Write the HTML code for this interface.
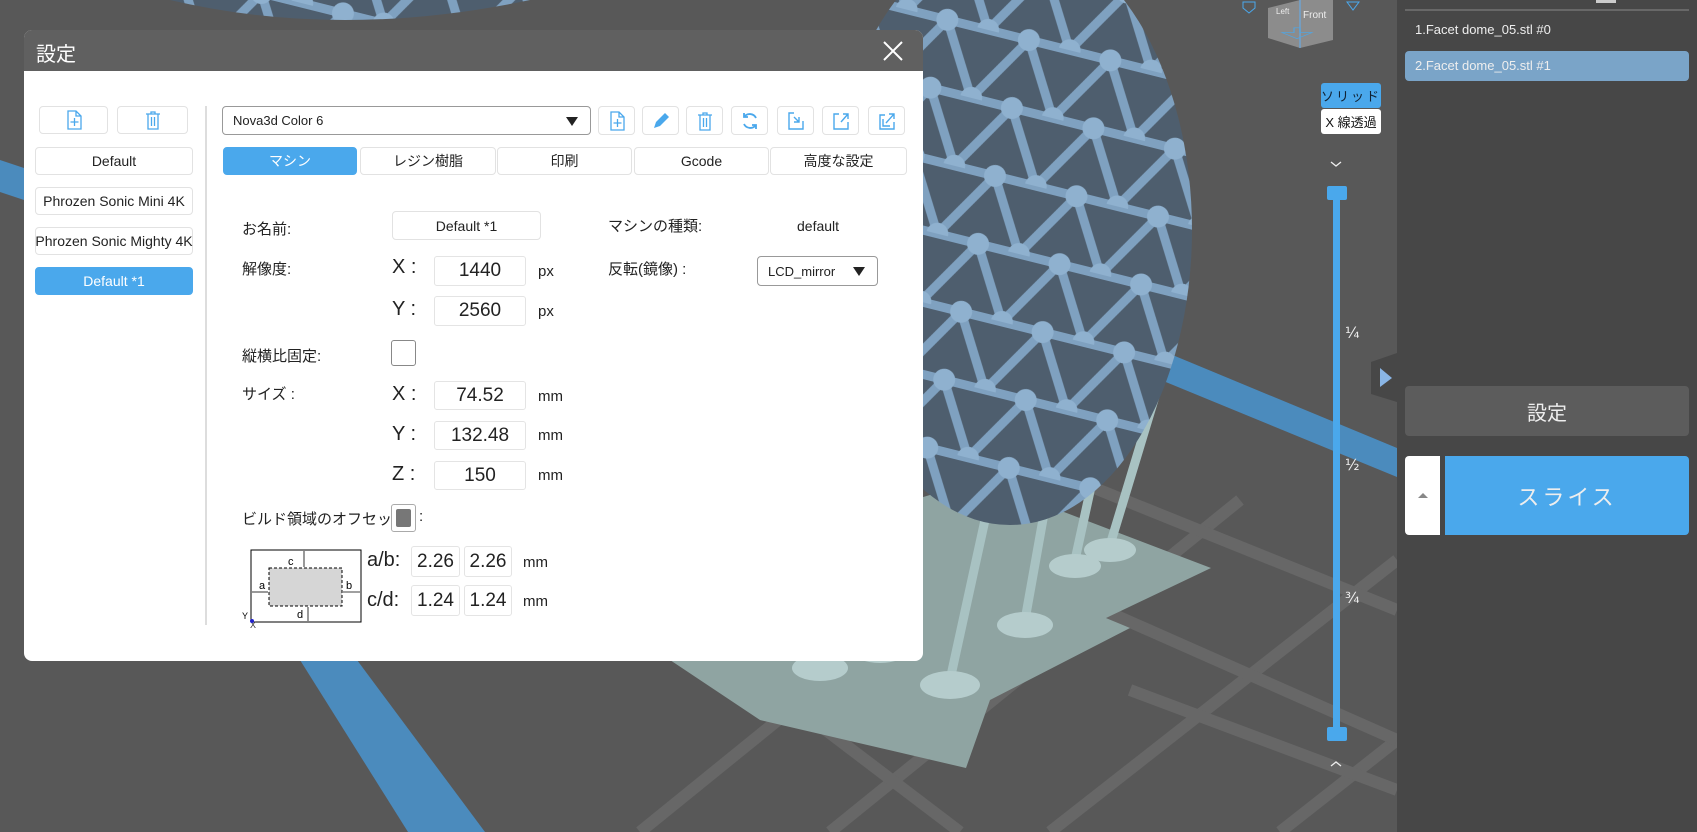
<!DOCTYPE html>
<html><head><meta charset="utf-8">
<style>
*{box-sizing:border-box;margin:0;padding:0}
body{width:1697px;height:832px;overflow:hidden;background:#585858;font-family:"Liberation Sans","Noto Sans CJK JP",sans-serif;position:relative}
.abs{position:absolute}
#dlg{left:24px;top:30px;width:899px;height:631px;background:#fff;border-radius:8px;overflow:hidden}
#tb{left:0;top:0;width:899px;height:41px;background:#606060}
.btn{position:absolute;border:1px solid #e2e2e2;border-radius:4px;background:#fff;font-size:14px;color:#222;display:flex;align-items:center;justify-content:center;white-space:nowrap}
.sel{background:#4aa8ec;color:#fff;border-color:#4aa8ec}
.lbl{position:absolute;font-size:15px;color:#222;white-space:nowrap}
.fld{position:absolute;border:1px solid #e4e4e4;border-radius:3px;font-size:19px;color:#222;display:flex;align-items:center;justify-content:center}
.big{position:absolute;font-size:20px;color:#222}
.unit{position:absolute;font-size:15px;color:#222}
.ib{position:absolute;top:76px;width:37px;height:29px;border:1px solid #e2e2e2;border-radius:4px;display:flex;align-items:center;justify-content:center}
</style></head><body>
<svg class="abs" style="left:0;top:0" width="1697" height="832">
<g stroke="#676767" stroke-width="12" fill="none">
<line x1="640" y1="832" x2="1000" y2="540"/><line x1="830" y1="832" x2="1240" y2="500"/><line x1="1050" y1="832" x2="1397" y2="560"/><line x1="1280" y1="832" x2="1397" y2="740"/>
<line x1="760" y1="680" x2="960" y2="832"/><line x1="900" y1="520" x2="1397" y2="740"/><line x1="1000" y1="450" x2="1397" y2="610"/><line x1="1130" y1="690" x2="1397" y2="790"/>
<line x1="650" y1="650" x2="820" y2="590"/>
</g>
<polygon points="300,660 357,660 485,832 408,832" fill="#4b8bbd"/>
<polygon points="1100,325 1397,448 1397,477 1100,355" fill="#4b8bbd"/>
<polygon points="0,160 24,168 24,200 0,192" fill="#4b8bbd"/>
<polygon points="780,540 980,480 1211,568 1106,618 1130,628 990,700 966,768 760,720 640,640" fill="#8fa4a2"/>
<g stroke="#a8c2c2" stroke-width="9" stroke-linecap="round">
<line x1="985" y1="520" x2="950" y2="680"/><line x1="1050" y1="480" x2="1025" y2="620"/><line x1="1110" y1="400" x2="1075" y2="560"/><line x1="1160" y1="380" x2="1110" y2="545"/>
<line x1="905" y1="510" x2="880" y2="640"/><line x1="840" y1="520" x2="820" y2="660"/>
</g>
<g fill="#b5cccc">
<ellipse cx="950" cy="685" rx="30" ry="14"/><ellipse cx="1025" cy="625" rx="28" ry="13"/><ellipse cx="1075" cy="566" rx="26" ry="12"/><ellipse cx="1110" cy="550" rx="26" ry="12"/><ellipse cx="880" cy="650" rx="28" ry="13"/><ellipse cx="820" cy="668" rx="28" ry="13"/>
</g>
<defs>
<pattern id="lat" width="84" height="70" patternUnits="userSpaceOnUse" patternTransform="rotate(14)">
<rect width="84" height="70" fill="#4e5e6e"/>
<g stroke="#7fa1c0" stroke-width="9"><line x1="0" y1="0" x2="84" y2="0"/><line x1="0" y1="70" x2="84" y2="70"/><line x1="0" y1="0" x2="42" y2="70"/><line x1="84" y1="0" x2="42" y2="70"/></g>
<g fill="#8fb1cf"><circle cx="0" cy="0" r="11"/><circle cx="84" cy="0" r="11"/><circle cx="42" cy="70" r="11"/><circle cx="0" cy="70" r="11"/><circle cx="84" cy="70" r="11"/></g>
</pattern>
</defs>
<ellipse cx="1010" cy="230" rx="182" ry="295" fill="url(#lat)"/>
<path d="M170,0 Q340,40 530,0 Z" fill="url(#lat)"/>
<polygon points="1268,8 1300,0 1333,0 1333,40 1300,48 1268,38" fill="#8c8c8c"/>
<line x1="1300" y1="0" x2="1300" y2="48" stroke="#6fa3d0" stroke-width="1.5"/>
<text x="1276" y="14" font-size="8" fill="#eee" font-family="Liberation Sans">Left</text>
<text x="1303" y="18" font-size="10" fill="#eee" font-family="Liberation Sans">Front</text>
<path d="M1290,31 h12 v-8 h6 v8 h12 l-15,10z" fill="none" stroke="#4aa8ec" transform="translate(-8,14) scale(1,.6)"/>
<path d="M1243,2 h12 v6 l-6,5 l-6,-5z" fill="none" stroke="#4aa8ec"/>
<path d="M1347,2 h12 l-6,8z" fill="none" stroke="#4aa8ec"/>
<rect x="1333" y="193" width="7" height="541" fill="#4aa8ec"/>
<rect x="1327" y="186" width="20" height="14" rx="2" fill="#4aa8ec"/>
<rect x="1327" y="727" width="20" height="14" rx="2" fill="#4aa8ec"/>
<path d="M1331,162 l5,4 l5,-4" stroke="#eee" fill="none" stroke-width="1.3"/>
<path d="M1331,766 l5,-4 l5,4" stroke="#eee" fill="none" stroke-width="1.3"/>
<text x="1345" y="338" font-size="15" fill="#eee" font-family="DejaVu Sans">¼</text>
<text x="1345" y="470" font-size="15" fill="#eee" font-family="DejaVu Sans">½</text>
<text x="1345" y="603" font-size="15" fill="#eee" font-family="DejaVu Sans">¾</text>
<rect x="1397" y="0" width="300" height="832" fill="#474747"/>
<polygon points="1371,362 1397,353 1397,402 1371,394" fill="#474747"/>
<polygon points="1380,368 1392,378 1380,387" fill="#8ab6e6"/>
<line x1="1405" y1="10" x2="1689" y2="10" stroke="#8a8a8a"/>
<rect x="1596" y="0" width="20" height="3" fill="#ccc"/>
</svg>
<div class="abs" style="left:1321px;top:83px;width:60px;height:25px;background:#4aa8ec;border-radius:3px;color:#123;font-size:13px;display:flex;align-items:center;justify-content:center;letter-spacing:2px">ソリッド</div>
<div class="abs" style="left:1321px;top:109px;width:60px;height:25px;background:#fff;border-radius:3px;color:#111;font-size:13px;display:flex;align-items:center;justify-content:center">X 線透過</div>
<div class="abs" style="left:1415px;top:22px;font-size:13px;color:#eee">1.Facet dome_05.stl #0</div>
<div class="abs" style="left:1405px;top:51px;width:284px;height:30px;background:#7aa4c8;border-radius:4px;font-size:13px;color:#eee;padding:7px 10px">2.Facet dome_05.stl #1</div>
<div class="abs" style="left:1405px;top:386px;width:284px;height:50px;background:#5c5c5c;border-radius:4px;font-size:20px;color:#eee;display:flex;align-items:center;justify-content:center">設定</div>
<div class="abs" style="left:1405px;top:456px;width:35px;height:79px;background:#fff;border-radius:4px 0 0 4px;display:flex;align-items:center;justify-content:center"><div style="width:0;height:0;border-left:5px solid transparent;border-right:5px solid transparent;border-bottom:5px solid #888"></div></div>
<div class="abs" style="left:1445px;top:456px;width:244px;height:79px;background:#4aa8ec;border-radius:0 4px 4px 0;font-size:22px;color:#eee;display:flex;align-items:center;justify-content:center;letter-spacing:3px">スライス</div>

<div id="dlg" class="abs">
<div id="tb" class="abs"></div>
<div class="abs" style="left:12px;top:8px;font-size:20px;color:#fff">設定</div>
<svg class="abs" style="left:858px;top:10px" width="22" height="22"><path d="M2,2 L20,20 M20,2 L2,20" stroke="#fff" stroke-width="2"/></svg>

<div class="btn" style="left:15px;top:76px;width:69px;height:28px"><svg width="18" height="20"><path d="M3,1 h8 l5,5 v13 h-13z M11,1 v5 h5 M9.5,8 v8 M5.5,12 h8" fill="none" stroke="#4aa8ec" stroke-width="1.3"/></svg></div>
<div class="btn" style="left:93px;top:76px;width:71px;height:28px"><svg width="18" height="20"><path d="M2,4 h14 M7,4 v-2 h4 v2 M4,4 v15 h10 v-15 M7.5,7 v9 M10.5,7 v9" fill="none" stroke="#4aa8ec" stroke-width="1.3"/></svg></div>
<div class="btn" style="left:11px;top:117px;width:158px;height:28px">Default</div>
<div class="btn" style="left:11px;top:157px;width:158px;height:28px">Phrozen Sonic Mini 4K</div>
<div class="btn" style="left:11px;top:197px;width:158px;height:28px">Phrozen Sonic Mighty 4K</div>
<div class="btn sel" style="left:11px;top:237px;width:158px;height:28px">Default *1</div>
<div class="abs" style="left:181px;top:76px;width:2px;height:519px;background:#ddd"></div>

<div class="btn" style="left:198px;top:76px;width:369px;height:29px;justify-content:flex-start;padding-left:10px;border-color:#999;font-size:13px">Nova3d Color 6<div style="position:absolute;right:12px;top:10px;border-left:6px solid transparent;border-right:6px solid transparent;border-top:9px solid #222"></div></div>
<div class="ib" style="left:574px"><svg width="18" height="20"><path d="M3,1 h8 l5,5 v13 h-13z M11,1 v5 h5 M9.5,8 v8 M5.5,12 h8" fill="none" stroke="#4aa8ec" stroke-width="1.3"/></svg></div>
<div class="ib" style="left:618px"><svg width="20" height="20"><path d="M3,17 l2,-6 l9,-9 l4,4 l-9,9z" fill="#4aa8ec"/></svg></div>
<div class="ib" style="left:662px"><svg width="18" height="20"><path d="M2,4 h14 M7,4 v-2 h4 v2 M4,4 v15 h10 v-15 M7.5,7 v9 M10.5,7 v9" fill="none" stroke="#4aa8ec" stroke-width="1.3"/></svg></div>
<div class="ib" style="left:707px"><svg width="20" height="20"><path d="M16,7 A7,7 0 0 0 4,6 M4,13 A7,7 0 0 0 16,14 M4,2 v4 h4 M16,18 v-4 h-4" fill="none" stroke="#4aa8ec" stroke-width="1.8"/></svg></div>
<div class="ib" style="left:753px"><svg width="20" height="20"><path d="M8,2 h-5 v16 h14 v-8 M8,6 l5,5 M13,6 v5 h-5" fill="none" stroke="#4aa8ec" stroke-width="1.4"/></svg></div>
<div class="ib" style="left:798px"><svg width="20" height="20"><path d="M8,3 h-5 v15 h14 v-7 M10,11 l7,-8 M12,3 h5 v5" fill="none" stroke="#4aa8ec" stroke-width="1.4"/></svg></div>
<div class="ib" style="left:844px"><svg width="20" height="20"><path d="M8,4 h-5 v14 h14 v-7 M6,8 v7 h7 M9,12 l8,-9 M12,3 h5 v5" fill="none" stroke="#4aa8ec" stroke-width="1.4"/></svg></div>

<div class="btn sel" style="left:199px;top:117px;width:134px;height:28px">マシン</div>
<div class="btn" style="left:336px;top:117px;width:136px;height:28px">レジン樹脂</div>
<div class="btn" style="left:473px;top:117px;width:135px;height:28px">印刷</div>
<div class="btn" style="left:610px;top:117px;width:135px;height:28px">Gcode</div>
<div class="btn" style="left:746px;top:117px;width:137px;height:28px">高度な設定</div>

<div class="lbl" style="left:218px;top:188px">お名前:</div>
<div class="btn" style="left:368px;top:181px;width:149px;height:29px">Default *1</div>
<div class="lbl" style="left:584px;top:185px">マシンの種類:</div>
<div class="lbl" style="left:773px;top:188px;font-size:14px">default</div>

<div class="lbl" style="left:218px;top:228px">解像度:</div>
<div class="big" style="left:368px;top:226px">X :</div>
<div class="fld" style="left:410px;top:226px;width:92px;height:30px">1440</div>
<div class="unit" style="left:514px;top:233px">px</div>
<div class="big" style="left:368px;top:268px">Y :</div>
<div class="fld" style="left:410px;top:266px;width:92px;height:30px">2560</div>
<div class="unit" style="left:514px;top:273px">px</div>

<div class="lbl" style="left:584px;top:228px">反転(鏡像) :</div>
<div class="btn" style="left:733px;top:226px;width:121px;height:30px;border-color:#999;justify-content:flex-start;padding-left:10px;font-size:13px">LCD_mirror<div style="position:absolute;right:12px;top:10px;border-left:6px solid transparent;border-right:6px solid transparent;border-top:9px solid #222"></div></div>

<div class="lbl" style="left:218px;top:315px">縦横比固定:</div>
<div class="abs" style="left:367px;top:310px;width:25px;height:26px;border:1px solid #888;border-radius:3px"></div>

<div class="lbl" style="left:218px;top:353px">サイズ :</div>
<div class="big" style="left:368px;top:353px">X :</div>
<div class="fld" style="left:410px;top:351px;width:92px;height:29px">74.52</div>
<div class="unit" style="left:514px;top:358px">mm</div>
<div class="big" style="left:368px;top:393px">Y :</div>
<div class="fld" style="left:410px;top:391px;width:92px;height:29px">132.48</div>
<div class="unit" style="left:514px;top:397px">mm</div>
<div class="big" style="left:368px;top:433px">Z :</div>
<div class="fld" style="left:410px;top:431px;width:92px;height:29px">150</div>
<div class="unit" style="left:514px;top:437px">mm</div>

<div class="lbl" style="left:218px;top:478px">ビルド領域のオフセッ</div>
<div class="abs" style="left:367px;top:474px;width:25px;height:28px;border:1px solid #aaa;border-radius:3px;background:#fff;padding:4px"><div style="width:100%;height:100%;background:#777;border-radius:2px"></div></div>
<div class="lbl" style="left:395px;top:478px">:</div>

<svg class="abs" style="left:218px;top:516px" width="120" height="82" font-family="Liberation Sans" font-size="11">
<rect x="9" y="4" width="110" height="72" fill="#fff" stroke="#000"/>
<rect x="27" y="22" width="73" height="38" fill="#d6d6d6" stroke="#000" stroke-dasharray="3,2"/>
<text x="46" y="19">c</text><text x="17" y="43">a</text><text x="104" y="43">b</text><text x="55" y="72">d</text>
<line x1="10" y1="46" x2="26" y2="46" stroke="#000" stroke-width=".8"/><line x1="101" y1="46" x2="118" y2="46" stroke="#000" stroke-width=".8"/>
<line x1="62" y1="5" x2="62" y2="21" stroke="#000" stroke-width=".8"/><line x1="66" y1="61" x2="66" y2="75" stroke="#000" stroke-width=".8"/>
<text x="0" y="73" font-size="9">Y</text><text x="8" y="82" font-size="9" fill="#333">X</text><circle cx="10" cy="75" r="2" fill="#22c"/>
</svg>
<div class="big" style="left:343px;top:519px">a/b:</div>
<div class="fld" style="left:387px;top:516px;width:49px;height:31px">2.26</div>
<div class="fld" style="left:440px;top:516px;width:48px;height:31px">2.26</div>
<div class="unit" style="left:499px;top:524px">mm</div>
<div class="big" style="left:343px;top:559px">c/d:</div>
<div class="fld" style="left:387px;top:555px;width:49px;height:31px">1.24</div>
<div class="fld" style="left:440px;top:555px;width:48px;height:31px">1.24</div>
<div class="unit" style="left:499px;top:563px">mm</div>
</div>
</body></html>
